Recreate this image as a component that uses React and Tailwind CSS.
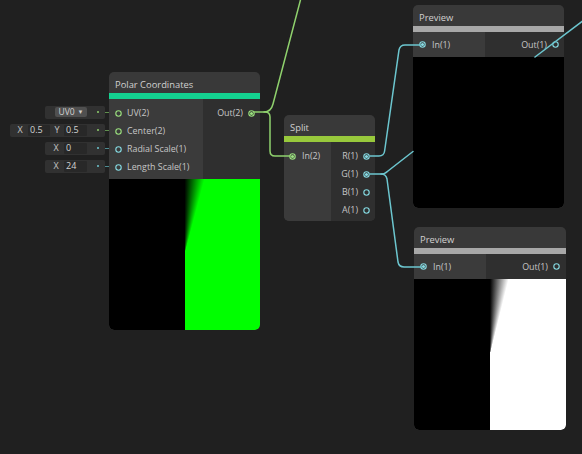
import React from "react";

const G = "#8fd16d";
const GP = "#9be27f";
const C = "#6cc6cf";
const CP = "#86dbe3";

function Port({ color, filled }) {
  return (
    <svg width="7" height="7" viewBox="0 0 7 7" className="shrink-0 block">
      <circle cx="3.5" cy="3.5" r="2.7" fill="none" stroke={color} strokeWidth="1.1" />
      {filled && <circle cx="3.5" cy="3.5" r="1.5" fill={color} />}
    </svg>
  );
}

function Field({ children, w }) {
  return (
    <div className={`${w} h-[11px] bg-[#282828] rounded-[1px] flex items-center pl-[2px] text-[9px] text-[#d2d2d2]`}>
      {children}
    </div>
  );
}

function Dot({ cls }) {
  return <div className={`ml-auto w-[2px] h-[2px] rounded-full ${cls}`} />;
}

export default function App() {
  return (
    <div
      className="relative w-[582px] h-[454px] bg-[#202020] overflow-hidden"
      style={{ fontFamily: '"Open Sans", "Liberation Sans", Arial, sans-serif' }}
    >
      {/* inline input values */}
      <div className="absolute left-0 top-[103px] w-[115px] flex flex-col items-end">
        <div className="h-[18px] flex items-center">
          <div className="w-[60px] h-[13px] bg-[#313131] rounded-[2px] flex items-center pl-[10px] pr-[6px]">
            <div className="w-[32px] h-[10px] bg-[#505050] rounded-[2px] flex items-center justify-center gap-[3px] text-[8.5px] text-[#d2d2d2]">
              <span>UV0</span>
              <span className="text-[6px] leading-none">▼</span>
            </div>
            <Dot cls="bg-[#8fd16d]" />
          </div>
          <div className="w-[10px] h-[1px] bg-[#5f8f4e]" />
        </div>
        <div className="h-[18px] flex items-center">
          <div className="w-[95px] h-[13px] bg-[#313131] rounded-[2px] flex items-center pl-[7px] pr-[6px] text-[9px] text-[#c4c4c4]">
            <span className="w-[6px] text-center">X</span>
            <div className="ml-[5px]">
              <Field w="w-[22px]">0.5</Field>
            </div>
            <span className="ml-[4px] w-[6px] text-center">Y</span>
            <div className="ml-[4px]">
              <Field w="w-[23px]">0.5</Field>
            </div>
            <Dot cls="bg-[#8fd16d]" />
          </div>
          <div className="w-[10px] h-[1px] bg-[#5f8f4e]" />
        </div>
        <div className="h-[18px] flex items-center">
          <div className="w-[60px] h-[13px] bg-[#313131] rounded-[2px] flex items-center pl-[8px] pr-[6px] text-[9px] text-[#c4c4c4]">
            <span className="w-[6px] text-center">X</span>
            <div className="ml-[5px]">
              <Field w="w-[23px]">0</Field>
            </div>
            <Dot cls="bg-[#6cc6cf]" />
          </div>
          <div className="w-[10px] h-[1px] bg-[#4d8c92]" />
        </div>
        <div className="h-[18px] flex items-center">
          <div className="w-[60px] h-[13px] bg-[#313131] rounded-[2px] flex items-center pl-[8px] pr-[6px] text-[9px] text-[#c4c4c4]">
            <span className="w-[6px] text-center">X</span>
            <div className="ml-[5px]">
              <Field w="w-[23px]">24</Field>
            </div>
            <Dot cls="bg-[#6cc6cf]" />
          </div>
          <div className="w-[10px] h-[1px] bg-[#4d8c92]" />
        </div>
      </div>

      {/* Polar Coordinates node */}
      <div className="absolute left-[109px] top-[72px] w-[151px] rounded-[5px] bg-[#393939] overflow-hidden">
        <div className="h-[21px] flex items-center pl-[6px] pt-[5px] text-[9.4px] text-[#d0d0d0]">Polar Coordinates</div>
        <div className="h-[6px] bg-[#14d190]" />
        <div className="flex h-[80px] text-[8.9px] text-[#c6c6c6]">
          <div className="w-[94px] bg-[#3b3b3b] pt-[5px] flex flex-col">
            <div className="h-[18px] flex items-center pl-[6px] gap-[5px]"><Port color={GP} /><span>UV(2)</span></div>
            <div className="h-[18px] flex items-center pl-[6px] gap-[5px]"><Port color={GP} /><span>Center(2)</span></div>
            <div className="h-[18px] flex items-center pl-[6px] gap-[5px]"><Port color={CP} /><span>Radial Scale(1)</span></div>
            <div className="h-[18px] flex items-center pl-[6px] gap-[5px]"><Port color={CP} /><span>Length Scale(1)</span></div>
          </div>
          <div className="flex-1 bg-[#2f2f2f] pt-[5px]">
            <div className="h-[18px] flex items-center justify-end pr-[5px] gap-[5px]"><span>Out(2)</span><Port color={GP} filled /></div>
          </div>
        </div>
        <div className="h-[151px] rounded-b-[5px] bg-[conic-gradient(from_0deg_at_50%_50%,#000000_0deg,#00ff00_15deg,#00ff00_180deg,#000000_180deg)]" />
      </div>

      {/* Split node */}
      <div className="absolute left-[284px] top-[115px] w-[91px] rounded-[5px] bg-[#393939] overflow-hidden">
        <div className="h-[21px] flex items-center pl-[6px] pt-[5px] text-[9.4px] text-[#d0d0d0]">Split</div>
        <div className="h-[6px] bg-[#98c93c]" />
        <div className="flex h-[79px] text-[8.9px] text-[#c6c6c6]">
          <div className="w-[47px] bg-[#3b3b3b] pt-[5px]">
            <div className="h-[18px] flex items-center pl-[5px] gap-[6px]"><Port color={GP} filled /><span>In(2)</span></div>
          </div>
          <div className="flex-1 bg-[#2f2f2f] pt-[5px] flex flex-col">
            <div className="h-[18px] flex items-center justify-end pr-[5px] gap-[5px]"><span>R(1)</span><Port color={CP} filled /></div>
            <div className="h-[18px] flex items-center justify-end pr-[5px] gap-[5px]"><span>G(1)</span><Port color={CP} filled /></div>
            <div className="h-[18px] flex items-center justify-end pr-[5px] gap-[5px]"><span>B(1)</span><Port color={CP} /></div>
            <div className="h-[18px] flex items-center justify-end pr-[5px] gap-[5px]"><span>A(1)</span><Port color={CP} /></div>
          </div>
        </div>
      </div>

      {/* Preview top */}
      <div className="absolute left-[413px] top-[5px] w-[151px] rounded-[5px] bg-[#393939] overflow-hidden">
        <div className="h-[21px] flex items-center pl-[6px] pt-[5px] text-[9.4px] text-[#d0d0d0]">Preview</div>
        <div className="h-[6px] bg-[#a8a8a8]" />
        <div className="flex h-[25px] text-[8.9px] text-[#c6c6c6]">
          <div className="w-[72px] bg-[#3b3b3b] flex items-center pl-[6px] gap-[6px]"><Port color={CP} filled /><span>In(1)</span></div>
          <div className="flex-1 bg-[#2f2f2f] flex items-center justify-end pr-[5px] gap-[5px]"><span>Out(1)</span><Port color={CP} /></div>
        </div>
        <div className="h-[151px] bg-black rounded-b-[5px]" />
      </div>

      {/* Preview bottom */}
      <div className="absolute left-[414px] top-[227px] w-[152px] rounded-[5px] bg-[#393939] overflow-hidden">
        <div className="h-[21px] flex items-center pl-[6px] pt-[5px] text-[9.4px] text-[#d0d0d0]">Preview</div>
        <div className="h-[6px] bg-[#a8a8a8]" />
        <div className="flex h-[25px] text-[8.9px] text-[#c6c6c6]">
          <div className="w-[72px] bg-[#3b3b3b] flex items-center pl-[6px] gap-[6px]"><Port color={CP} filled /><span>In(1)</span></div>
          <div className="flex-1 bg-[#2f2f2f] flex items-center justify-end pr-[6px] gap-[5px]"><span>Out(1)</span><Port color={CP} /></div>
        </div>
        <div className="h-[151px] rounded-b-[5px] bg-[conic-gradient(from_0deg_at_50%_50%,#000000_0deg,#ffffff_14deg,#ffffff_180deg,#000000_180deg)]" />
      </div>

      {/* wires */}
      <svg className="absolute inset-0 pointer-events-none" width="582" height="454" viewBox="0 0 582 454">
        <g fill="none" strokeWidth="1.5" strokeLinecap="round">
          <path d="M254 112 L265 112 Q270 112 270 117 L270 151 Q270 156 275 156 L290 156" stroke={G} />
          <path d="M264 112 Q271 112 273 104 L301 -2" stroke={G} />
          <path d="M370 156 L379 156 Q384 156 384.6 151 L399 50 Q400 45 405 45 L420 45" stroke={C} />
          <path d="M370 174 L381 174 Q385 174 388 171 L413 151.5" stroke={C} />
          <path d="M381 174 Q386 174 387 179 L398 262 Q399 267 404 267 L421 267" stroke={C} />
          <path d="M535 57 L584 20" stroke={C} />
        </g>
      </svg>
    </div>
  );
}
